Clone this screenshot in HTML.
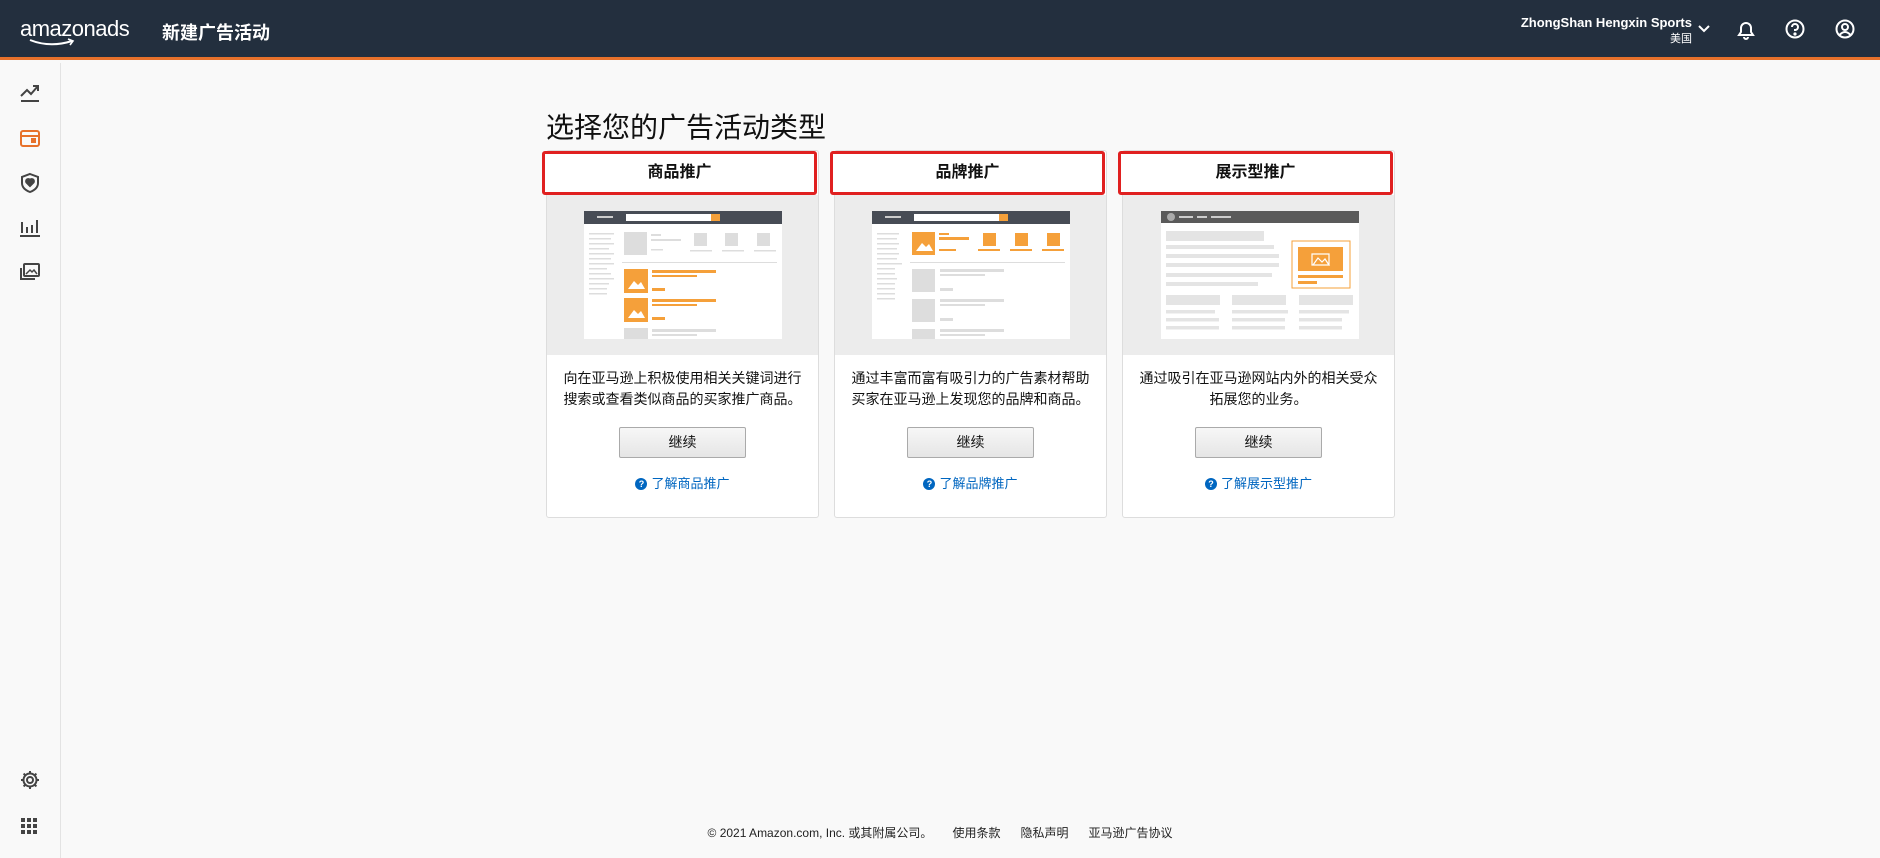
<!DOCTYPE html>
<html><head><meta charset="utf-8"><style>
*{box-sizing:border-box;margin:0;padding:0}
body{width:1880px;height:858px;background:#f9f9f9;font-family:"Liberation Sans","Noto Sans CJK SC",sans-serif;position:relative;overflow:hidden;color:#111}
.hdr{position:absolute;left:0;top:0;width:1880px;height:60px;background:#232f3e;border-bottom:3px solid #e7712b}
.logo{position:absolute;left:20px;top:16px;color:#fff;font-size:22px;letter-spacing:-0.5px}
.ttl{position:absolute;left:162px;top:19px;color:#fff;font-size:18px;font-weight:bold}
.acct{position:absolute;right:188px;top:15px;color:#fff;text-align:right;font-size:13px;line-height:16px;font-weight:bold}
.acct small{font-size:11px;font-weight:normal;display:block}
.side{position:absolute;left:0;top:63px;width:61px;height:795px;background:#f9f9f9;border-right:1px solid #e3e3e3}
.side svg{position:absolute;left:19px}
h1{position:absolute;left:546px;top:106px;font-size:28px;font-weight:normal;color:#111}
.card{position:absolute;top:150px;width:273px;height:368px;background:#fff;border:1px solid #ddd;border-radius:3px}
.card .img{position:absolute;left:0;top:44px;width:100%;height:160px;background:#ececec}
.card .tag{position:absolute;left:-5px;top:0;width:275px;height:44px;border:3px solid #e02020;border-radius:3px;background:#fff;text-align:center;font-weight:bold;font-size:16px;line-height:38px}
.card .txt{position:absolute;left:0;top:217px;width:100%;text-align:center;font-size:14px;line-height:21px;color:#111}
.card .btn{position:absolute;left:72px;top:276px;width:127px;height:31px;border:1px solid #aaa;border-radius:2px;background:linear-gradient(#f7f7f7,#e5e5e5);text-align:center;line-height:29px;font-size:14px}
.card .lk{position:absolute;left:0;top:322px;width:100%;text-align:center;font-size:13px;color:#0066c0}
.lk b{display:inline-block;width:12px;height:12px;border-radius:6px;background:#0066c0;color:#fff;font-size:9px;line-height:12px;margin-right:4px;vertical-align:1px}
.mock{position:absolute;top:60px}
.foot{position:absolute;top:824px;left:0;width:1880px;text-align:center;font-size:12px;color:#222}
.foot span{margin:0 10px}
</style></head><body>
<div class="hdr">
<div class="logo">amazonads<svg style="position:absolute;left:8px;top:22px" width="50" height="10"><path d="M2 2 Q22 10 44 3" stroke="#fff" stroke-width="2" fill="none"/><path d="M40 1 L45 3 L42 7" stroke="#fff" stroke-width="1.6" fill="none"/></svg></div>
<div class="ttl">新建广告活动</div>
<div class="acct">ZhongShan Hengxin Sports<small>美国</small></div>
<svg style="position:absolute;left:1697px;top:24px" width="14" height="10"><path d="M2 2 L7 7 L12 2" stroke="#fff" stroke-width="2" fill="none"/></svg>
<svg style="position:absolute;left:1735px;top:18px" width="22" height="24" fill="none" stroke="#fff" stroke-width="2"><path d="M4 17 L6 14 V10 A5 5 0 0 1 16 10 V14 L18 17 Z"/><path d="M9 19 A2 2 0 0 0 13 19"/></svg>
<svg style="position:absolute;left:1784px;top:18px" width="22" height="22" fill="none" stroke="#fff" stroke-width="2"><circle cx="11" cy="11" r="8.5"/><path d="M8 9 A3 3 0 1 1 11 12 V13"/><circle cx="11" cy="16" r="0.6" fill="#fff"/></svg>
<svg style="position:absolute;left:1834px;top:18px" width="22" height="22" fill="none" stroke="#fff" stroke-width="2"><circle cx="11" cy="11" r="8.5"/><circle cx="11" cy="9" r="3"/><path d="M5.5 17 Q11 11 16.5 17"/></svg>
</div>
<div class="side">
<svg style="top:20px" width="22" height="20" fill="none" stroke="#444" stroke-width="2"><path d="M2 13 L8 7 L12 11 L19 3 M14 3 H19 V8 M2 18 H20"/></svg>
<svg style="top:66px" width="22" height="20" fill="none" stroke="#e7712b" stroke-width="2"><rect x="2" y="2" width="18" height="15" rx="2"/><path d="M2 7 H20"/><rect x="13" y="10" width="3" height="3" fill="#e7712b"/></svg>
<svg style="top:109px" width="22" height="22" fill="none" stroke="#444" stroke-width="2"><path d="M11 2 L19 5 V11 Q19 17 11 20 Q3 17 3 11 V5 Z"/><path d="M11 14 L7.5 10.5 A2 2 0 0 1 11 8 A2 2 0 0 1 14.5 10.5 Z" fill="#444"/></svg>
<svg style="top:155px" width="22" height="20" fill="none" stroke="#444" stroke-width="2"><path d="M3 4 V15 M8 9 V15 M13 7 V15 M18 2 V15 M1 18 H21"/></svg>
<svg style="top:199px" width="22" height="20" fill="none" stroke="#444" stroke-width="2"><rect x="5" y="2" width="15" height="12" rx="1"/><path d="M2 6 V17 H16"/><path d="M7 12 L11 8 L13 10 L15 8 L18 12" stroke-width="1.5"/></svg>
<svg style="top:706px" width="22" height="22" fill="none" stroke="#444" stroke-width="2"><circle cx="11" cy="11" r="3"/><path d="M11 2 V4 M11 18 V20 M2 11 H4 M18 11 H20 M4.6 4.6 L6 6 M16 16 L17.4 17.4 M4.6 17.4 L6 16 M16 6 L17.4 4.6"/><circle cx="11" cy="11" r="6.5"/></svg>
<svg style="top:753px" width="20" height="20" fill="#444"><rect x="2" y="2" width="4" height="4"/><rect x="8" y="2" width="4" height="4"/><rect x="14" y="2" width="4" height="4"/><rect x="2" y="8" width="4" height="4"/><rect x="8" y="8" width="4" height="4"/><rect x="14" y="8" width="4" height="4"/><rect x="2" y="14" width="4" height="4"/><rect x="8" y="14" width="4" height="4"/><rect x="14" y="14" width="4" height="4"/></svg>
</div>
<h1>选择您的广告活动类型</h1>

<div class="card" style="left:546px">
<div class="img"></div>
<svg class="mock" style="left:37px" width="198" height="128"><rect width="198" height="128" fill="#fff"/><rect width="198" height="13" fill="#474c55"/><rect x="42" y="3" width="85" height="7" fill="#fff"/><rect x="127" y="3" width="9" height="7" fill="#f5a03a"/><rect x="13" y="5" width="16" height="2" fill="#ccc"/>
<g fill="#ddd"><rect x="5" y="22" width="25" height="1.5"/><rect x="5" y="27" width="22" height="1.5"/><rect x="5" y="32" width="25" height="1.5"/><rect x="5" y="37" width="20" height="1.5"/><rect x="5" y="42" width="25" height="1.5"/><rect x="5" y="47" width="22" height="1.5"/><rect x="5" y="52" width="25" height="1.5"/><rect x="5" y="57" width="18" height="1.5"/><rect x="5" y="62" width="22" height="1.5"/><rect x="5" y="67" width="25" height="1.5"/><rect x="5" y="72" width="20" height="1.5"/><rect x="5" y="77" width="18" height="1.5"/><rect x="5" y="82" width="18" height="1.5"/>
<rect x="40" y="21" width="23" height="23"/><rect x="67" y="23" width="10" height="2"/><rect x="67" y="28" width="30" height="2"/><rect x="67" y="38" width="12" height="1.5"/>
<rect x="110" y="22" width="13" height="13"/><rect x="141" y="22" width="13" height="13"/><rect x="173" y="22" width="13" height="13"/><rect x="106" y="39" width="22" height="1.5"/><rect x="138" y="39" width="22" height="1.5"/><rect x="170" y="39" width="22" height="1.5"/>
<rect x="38" y="51" width="155" height="1"/><rect x="40" y="117" width="24" height="11"/><rect x="68" y="118" width="64" height="3"/><rect x="68" y="123" width="45" height="2"/></g>
<g fill="#f5a03a"><rect x="40" y="58" width="24" height="24"/><rect x="68" y="59" width="64" height="3"/><rect x="68" y="64" width="45" height="2"/><rect x="68" y="77" width="13" height="3"/><rect x="40" y="87" width="24" height="24"/><rect x="68" y="88" width="64" height="3"/><rect x="68" y="93" width="45" height="2"/><rect x="68" y="106" width="13" height="3"/></g>
<g fill="#fff"><path d="M44 78 L50 70 L54 74 L57 71 L61 78 Z"/><path d="M44 107 L50 99 L54 103 L57 100 L61 107 Z"/></g></svg>
<div class="tag">商品推广</div>
<div class="txt">向在亚马逊上积极使用相关关键词进行<br>搜索或查看类似商品的买家推广商品。</div>
<div class="btn">继续</div>
<div class="lk"><b>?</b>了解商品推广</div>
</div>

<div class="card" style="left:834px">
<div class="img"></div>
<svg class="mock" style="left:37px" width="198" height="128"><rect width="198" height="128" fill="#fff"/><rect width="198" height="13" fill="#474c55"/><rect x="42" y="3" width="85" height="7" fill="#fff"/><rect x="127" y="3" width="9" height="7" fill="#f5a03a"/><rect x="13" y="5" width="16" height="2" fill="#ccc"/>
<g fill="#ddd"><rect x="5" y="22" width="22" height="1.5"/><rect x="5" y="27" width="20" height="1.5"/><rect x="5" y="32" width="22" height="1.5"/><rect x="5" y="37" width="20" height="1.5"/><rect x="5" y="42" width="22" height="1.5"/><rect x="5" y="47" width="20" height="1.5"/><rect x="5" y="52" width="25" height="1.5"/><rect x="5" y="57" width="18" height="1.5"/><rect x="5" y="62" width="18" height="1.5"/><rect x="5" y="67" width="20" height="1.5"/><rect x="5" y="72" width="18" height="1.5"/><rect x="5" y="77" width="18" height="1.5"/><rect x="5" y="82" width="18" height="1.5"/><rect x="5" y="87" width="18" height="1.5"/>
<rect x="40" y="58" width="23" height="23"/><rect x="68" y="58" width="64" height="3"/><rect x="68" y="63" width="45" height="2"/><rect x="68" y="77" width="13" height="3"/>
<rect x="40" y="88" width="23" height="23"/><rect x="68" y="88" width="64" height="3"/><rect x="68" y="93" width="45" height="2"/><rect x="68" y="107" width="13" height="3"/>
<rect x="40" y="118" width="23" height="10"/><rect x="68" y="118" width="64" height="3"/><rect x="68" y="123" width="45" height="2"/><rect x="38" y="51" width="155" height="1"/></g>
<g fill="#f5a03a"><rect x="40" y="21" width="23" height="23"/><rect x="67" y="22" width="10" height="2"/><rect x="67" y="26" width="30" height="3"/><rect x="67" y="38" width="17" height="2"/><rect x="111" y="22" width="13" height="13"/><rect x="143" y="22" width="13" height="13"/><rect x="175" y="22" width="13" height="13"/><rect x="106" y="38" width="22" height="2"/><rect x="138" y="38" width="22" height="2"/><rect x="170" y="38" width="22" height="2"/></g>
<g fill="#fff"><path d="M44 40 L50 32 L54 36 L57 33 L61 40 Z"/></g></svg>
<div class="tag">品牌推广</div>
<div class="txt">通过丰富而富有吸引力的广告素材帮助<br>买家在亚马逊上发现您的品牌和商品。</div>
<div class="btn">继续</div>
<div class="lk"><b>?</b>了解品牌推广</div>
</div>

<div class="card" style="left:1122px">
<div class="img"></div>
<svg class="mock" style="left:38px" width="198" height="128"><rect width="198" height="128" fill="#fff"/><rect width="198" height="12" fill="#5a5a5a"/><circle cx="10" cy="6" r="4" fill="#aaa"/><g fill="#ccc"><rect x="18" y="5" width="14" height="2"/><rect x="36" y="5" width="10" height="2"/><rect x="50" y="5" width="20" height="2"/></g>
<g fill="#e4e4e4"><rect x="5" y="20" width="98" height="10"/><rect x="5" y="34" width="108" height="4"/><rect x="5" y="43" width="113" height="4"/><rect x="5" y="52" width="113" height="4"/><rect x="5" y="62" width="106" height="4"/><rect x="5" y="71" width="92" height="4"/><rect x="5" y="84" width="54" height="10"/><rect x="71" y="84" width="54" height="10"/><rect x="138" y="84" width="54" height="10"/><rect x="5" y="99" width="49" height="3.5"/><rect x="71" y="99" width="56" height="3.5"/><rect x="138" y="99" width="50" height="3.5"/><rect x="5" y="107" width="53" height="3.5"/><rect x="71" y="107" width="53" height="3.5"/><rect x="138" y="107" width="43" height="3.5"/><rect x="5" y="115" width="53" height="3.5"/><rect x="71" y="115" width="53" height="3.5"/><rect x="138" y="115" width="43" height="3.5"/></g>
<rect x="131" y="30" width="58" height="47" fill="#fff" stroke="#f5a03a" stroke-width="1"/><g fill="#f5a03a"><rect x="137" y="36" width="45" height="24"/><rect x="137" y="64" width="45" height="3"/><rect x="137" y="70" width="19" height="3"/></g><path d="M152 54 L157 47 L161 51 L164 48 L168 54 Z M151 43 H168 V54 H151 Z" fill="none" stroke="#fff" stroke-width="1.2"/>
</svg>
<div class="tag">展示型推广</div>
<div class="txt">通过吸引在亚马逊网站内外的相关受众<br>拓展您的业务。</div>
<div class="btn">继续</div>
<div class="lk"><b>?</b>了解展示型推广</div>
</div>

<div class="foot"><span>© 2021 Amazon.com, Inc. 或其附属公司。</span><span>使用条款</span><span>隐私声明</span><span>亚马逊广告协议</span></div>
</body></html>
